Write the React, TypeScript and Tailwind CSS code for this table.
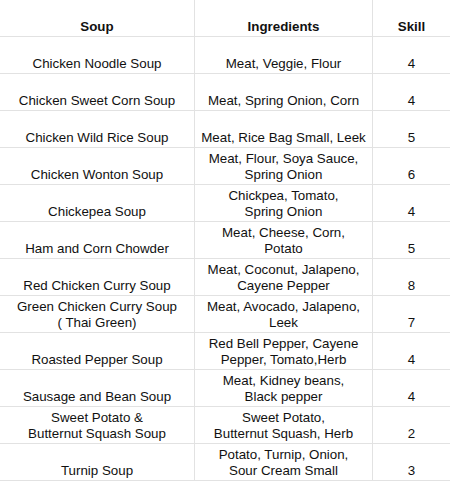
type Row = {
  soup: string[]
  ingredients: string[]
  skill: string
}

const rows: Row[] = [
  { soup: ['Chicken Noodle Soup'], ingredients: ['Meat, Veggie, Flour'], skill: '4' },
  { soup: ['Chicken Sweet Corn Soup'], ingredients: ['Meat, Spring Onion, Corn'], skill: '4' },
  { soup: ['Chicken Wild Rice Soup'], ingredients: ['Meat, Rice Bag Small, Leek'], skill: '5' },
  { soup: ['Chicken Wonton Soup'], ingredients: ['Meat, Flour, Soya Sauce,', 'Spring Onion'], skill: '6' },
  { soup: ['Chickepea Soup'], ingredients: ['Chickpea, Tomato,', 'Spring Onion'], skill: '4' },
  { soup: ['Ham and Corn Chowder'], ingredients: ['Meat, Cheese, Corn,', 'Potato'], skill: '5' },
  { soup: ['Red Chicken Curry Soup'], ingredients: ['Meat, Coconut, Jalapeno,', 'Cayene Pepper'], skill: '8' },
  {
    soup: ['Green Chicken Curry Soup', '( Thai Green)'],
    ingredients: ['Meat, Avocado, Jalapeno,', 'Leek'],
    skill: '7',
  },
  { soup: ['Roasted Pepper Soup'], ingredients: ['Red Bell Pepper, Cayene', 'Pepper, Tomato,Herb'], skill: '4' },
  { soup: ['Sausage and Bean Soup'], ingredients: ['Meat, Kidney beans,', 'Black pepper'], skill: '4' },
  {
    soup: ['Sweet Potato &', 'Butternut Squash Soup'],
    ingredients: ['Sweet Potato,', 'Butternut Squash, Herb'],
    skill: '2',
  },
  { soup: ['Turnip Soup'], ingredients: ['Potato, Turnip, Onion,', 'Sour Cream Small'], skill: '3' },
]

function Cell({ lines, last, bold }: { lines: string[]; last?: boolean; bold?: boolean }) {
  return (
    <div
      className={`flex h-[37px] flex-col items-center justify-end border-b border-[#e2e2e2] pb-[1px] text-center leading-[16px] ${
        last ? '' : 'border-r'
      } ${bold ? 'font-bold' : ''}`}
    >
      {lines.map((line) => (
        <span key={line} className="whitespace-nowrap">
          {line}
        </span>
      ))}
    </div>
  )
}

export default function App() {
  return (
    <div className="min-h-screen bg-white">
      <div
        className="grid w-[450px] grid-cols-[195px_178px_77px] text-[13.33px] text-[#111]"
        style={{ fontFamily: '"Liberation Sans", Arial, sans-serif' }}
      >
        {/* Header */}
        <Cell lines={['Soup']} bold />
        <Cell lines={['Ingredients']} bold />
        <Cell lines={['Skill']} bold last />

        {/* Recipes */}
        {rows.map((row) => (
          <div key={row.soup.join(' ')} className="contents">
            <Cell lines={row.soup} />
            <Cell lines={row.ingredients} />
            <Cell lines={[row.skill]} last />
          </div>
        ))}
      </div>
    </div>
  )
}
